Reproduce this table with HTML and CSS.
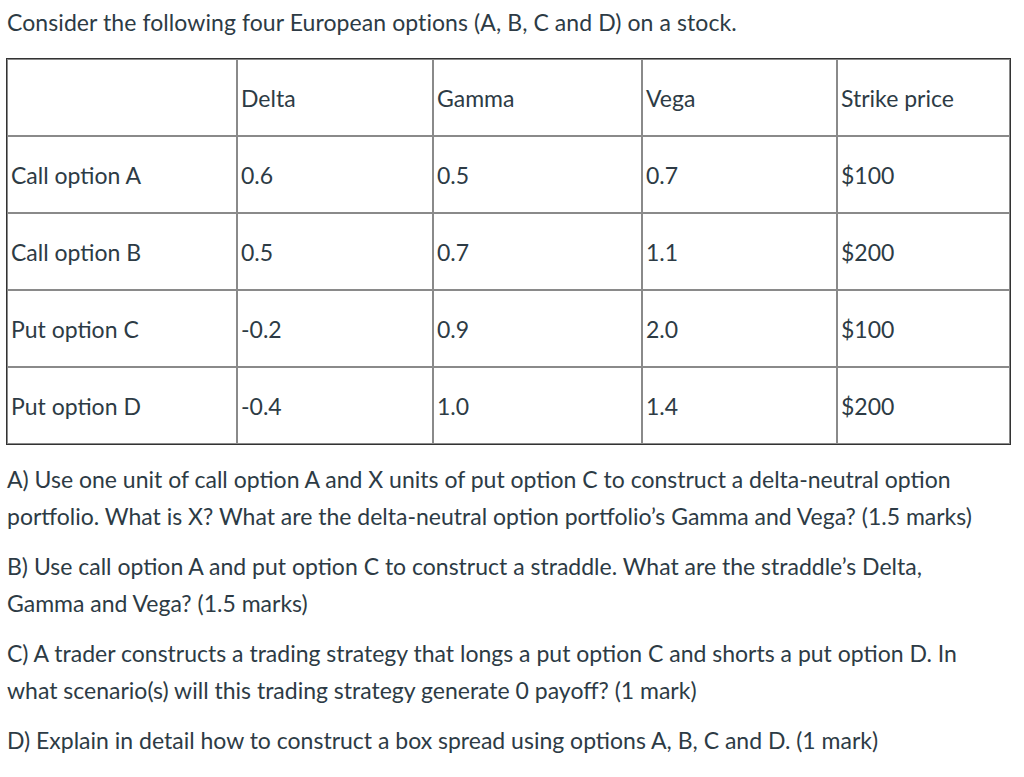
FILE: index.html
```html
<!DOCTYPE html>
<html>
<head>
<meta charset="utf-8">
<link rel="stylesheet" href="styles.css">
</head>
<body>
<div class="page">
  <p class="intro">Consider the following four European options (A, B, C and D) on a stock.</p>
  <table class="options">
    <colgroup>
      <col class="c1"><col class="c2"><col class="c3"><col class="c4"><col class="c5">
    </colgroup>
    <tr><td></td><td>Delta</td><td>Gamma</td><td>Vega</td><td>Strike price</td></tr>
    <tr><td>Call option A</td><td>0.6</td><td>0.5</td><td>0.7</td><td>$100</td></tr>
    <tr><td>Call option B</td><td>0.5</td><td>0.7</td><td>1.1</td><td>$200</td></tr>
    <tr><td>Put option C</td><td>-0.2</td><td>0.9</td><td>2.0</td><td>$100</td></tr>
    <tr><td>Put option D</td><td>-0.4</td><td>1.0</td><td>1.4</td><td>$200</td></tr>
  </table>
  <p class="q first">A) Use one unit of call option A and X units of put option C to construct a delta-neutral option portfolio. What is X? What are the delta-neutral option portfolio’s Gamma and Vega? (1.5 marks)</p>
  <p class="q">B) Use call option A and put option C to construct a straddle. What are the straddle’s Delta, Gamma and Vega? (1.5 marks)</p>
  <p class="q">C) A trader constructs a trading strategy that longs a put option C and shorts a put option D. In what scenario(s) will this trading strategy generate 0 payoff? (1 mark)</p>
  <p class="q">D) Explain in detail how to construct a box spread using options A, B, C and D. (1 mark)</p>
</div>
</body>
</html>
```

FILE: styles.css
```css
html, body {
  margin: 0;
  padding: 0;
  background: #ffffff;
}
body {
  font-family: Lato, "Liberation Sans", sans-serif;
  font-size: 23px;
  color: #2d3b45;
}
.page {
  padding: 4px 10px 0 6px;
}
.intro {
  margin: 0 0 18px 1px;
  line-height: 36px;
  letter-spacing: 0.08px;
}
.options {
  border-collapse: separate;
  border-spacing: 0;
  border: 1px solid #333333;
  width: 1005px;
  table-layout: fixed;
}
.options td {
  border: 1px solid #8a8a8a;
  height: 75px;
  padding: 0 0 0 3px;
  vertical-align: middle;
  line-height: 26px;
}
.c1 { width: 230px; }
.c2 { width: 196px; }
.c3 { width: 209px; }
.c4 { width: 195px; }
.c5 { width: 173px; }
.q {
  margin: 14px 24px 0 1px;
  line-height: 36.5px;
}
.q.first {
  margin-top: 16px;
}
```
